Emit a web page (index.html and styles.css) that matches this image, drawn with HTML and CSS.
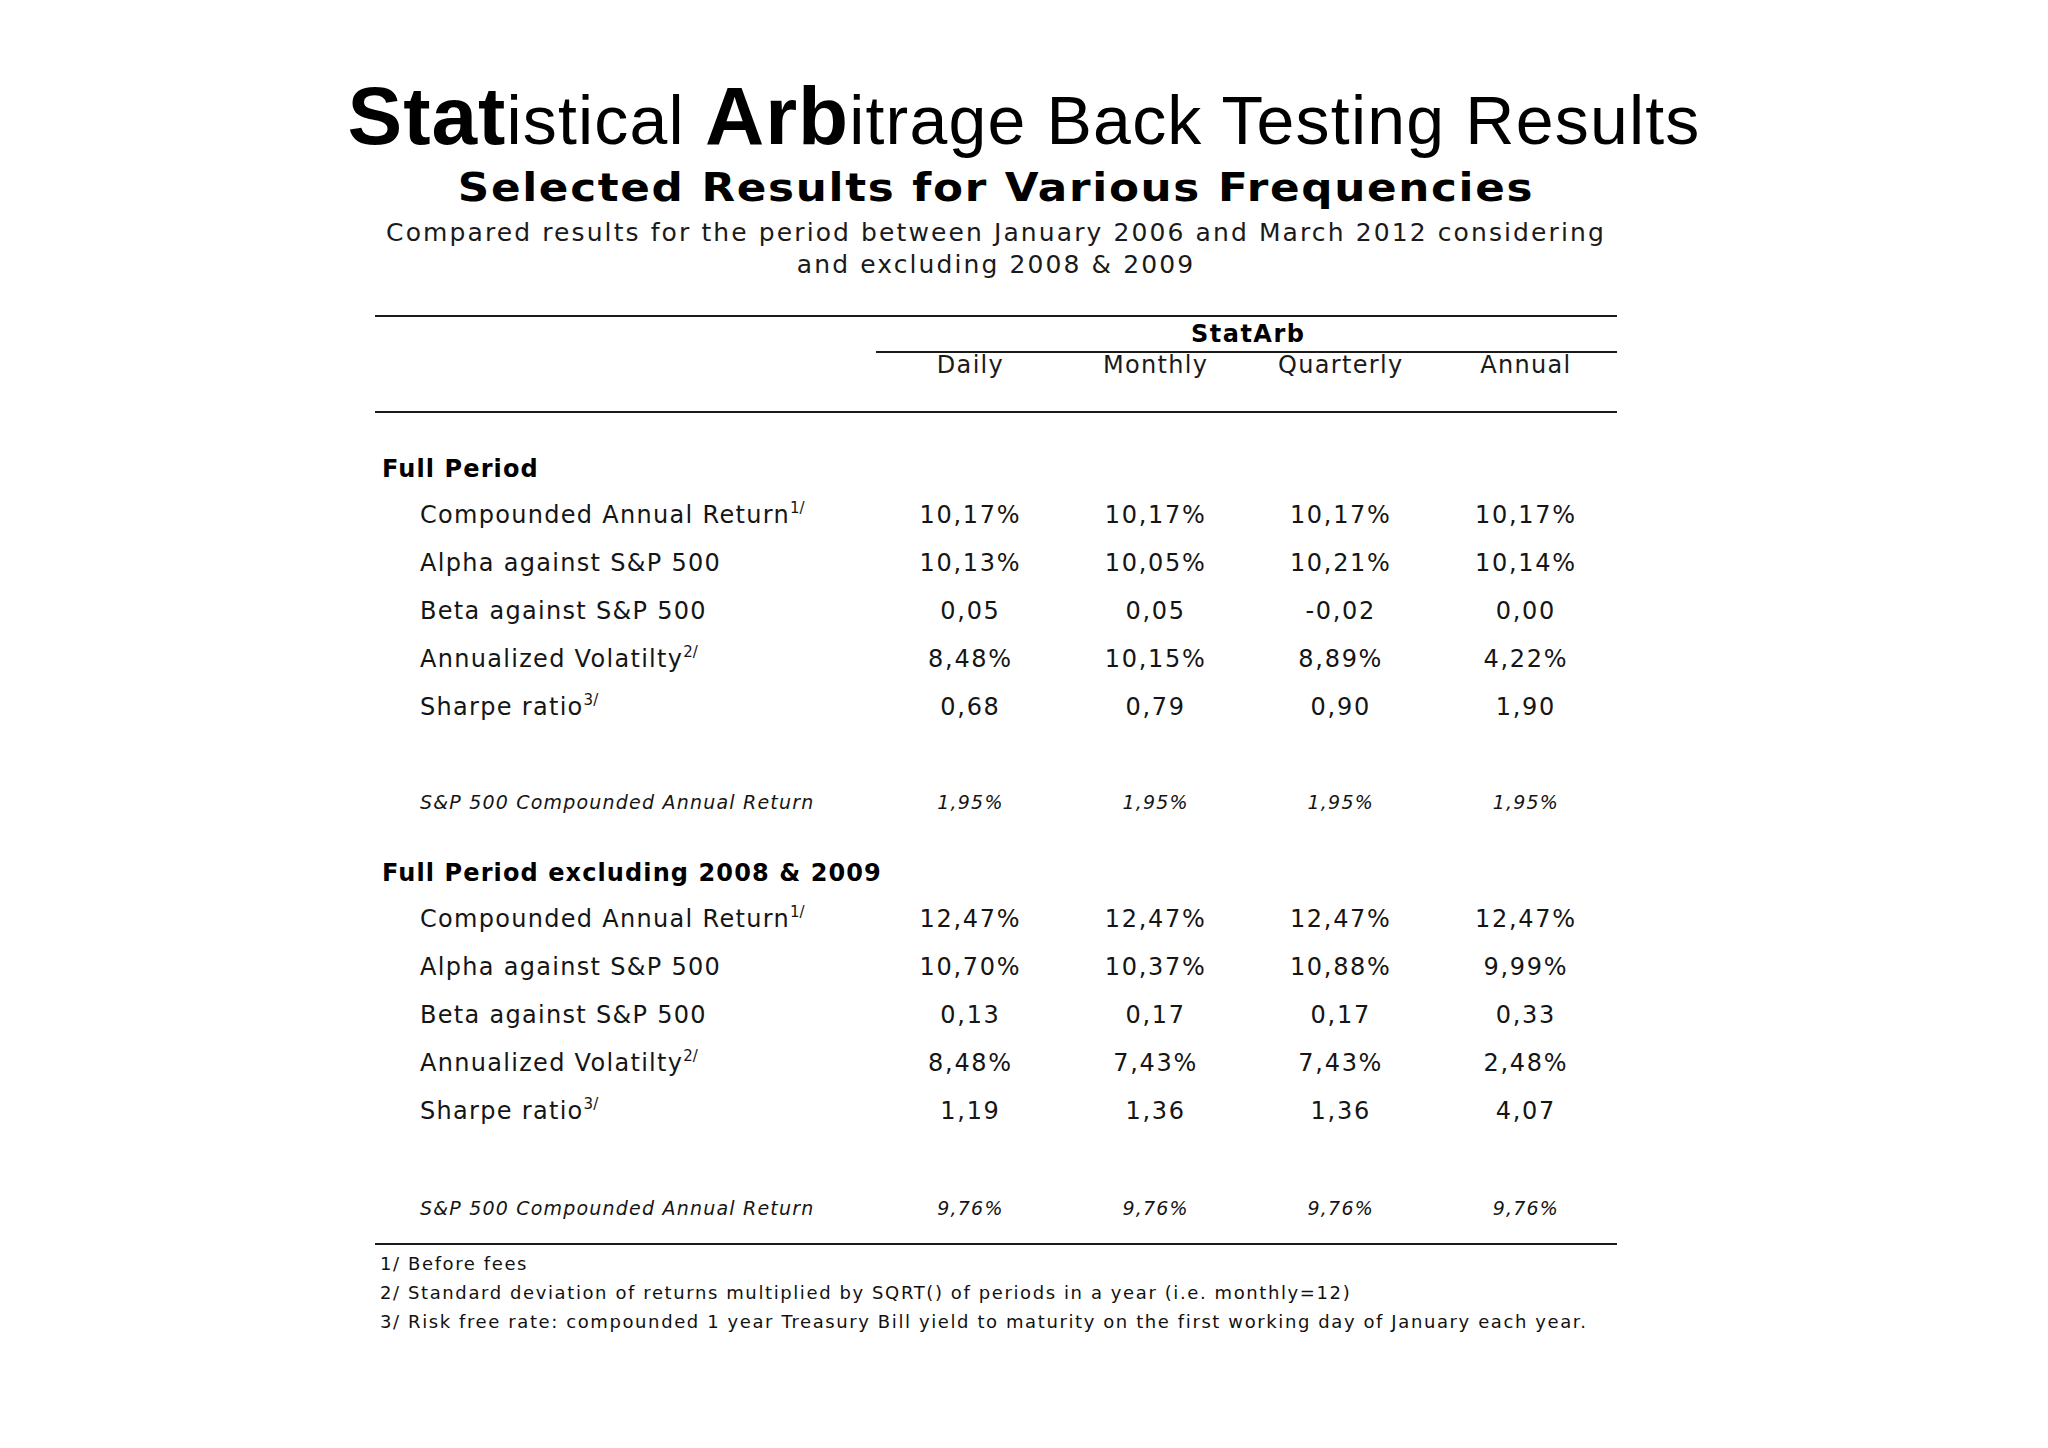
FILE: index.html
```html
<!DOCTYPE html>
<html lang="en">
<head>
<meta charset="utf-8">
<title>Statistical Arbitrage Back Testing Results</title>
<link rel="stylesheet" href="styles.css">
</head>
<body>
<main class="page">
  <h1 class="title"><b>Stat</b>istical <b>Arb</b>itrage Back Testing Results</h1>
  <section class="report">
    <h2 class="subtitle">Selected Results for Various Frequencies</h2>
    <p class="desc">Compared results for the period between January 2006 and March 2012 considering<br>and excluding 2008 &amp; 2009</p>
    <table class="results">
      <colgroup>
        <col class="c-label"><col class="c-val"><col class="c-val"><col class="c-val"><col class="c-val">
      </colgroup>
      <thead>
        <tr class="h1row">
          <th class="blank"></th>
          <th class="group" colspan="4">StatArb</th>
        </tr>
        <tr class="h2row">
          <th class="blank"></th>
          <th>Daily</th><th>Monthly</th><th>Quarterly</th><th>Annual</th>
        </tr>
      </thead>
      <tbody>
        <tr class="section first">
          <td colspan="5">Full Period</td>
        </tr>
        <tr class="data"><td>Compounded Annual Return<sup>1/</sup></td><td>10,17%</td><td>10,17%</td><td>10,17%</td><td>10,17%</td></tr>
        <tr class="data"><td>Alpha against S&amp;P 500</td><td>10,13%</td><td>10,05%</td><td>10,21%</td><td>10,14%</td></tr>
        <tr class="data"><td>Beta against S&amp;P 500</td><td>0,05</td><td>0,05</td><td>-0,02</td><td>0,00</td></tr>
        <tr class="data"><td>Annualized Volatilty<sup>2/</sup></td><td>8,48%</td><td>10,15%</td><td>8,89%</td><td>4,22%</td></tr>
        <tr class="data"><td>Sharpe ratio<sup>3/</sup></td><td>0,68</td><td>0,79</td><td>0,90</td><td>1,90</td></tr>
        <tr class="bench"><td>S&amp;P 500 Compounded Annual Return</td><td>1,95%</td><td>1,95%</td><td>1,95%</td><td>1,95%</td></tr>
        <tr class="section second">
          <td colspan="5">Full Period excluding 2008 &amp; 2009</td>
        </tr>
        <tr class="data"><td>Compounded Annual Return<sup>1/</sup></td><td>12,47%</td><td>12,47%</td><td>12,47%</td><td>12,47%</td></tr>
        <tr class="data"><td>Alpha against S&amp;P 500</td><td>10,70%</td><td>10,37%</td><td>10,88%</td><td>9,99%</td></tr>
        <tr class="data"><td>Beta against S&amp;P 500</td><td>0,13</td><td>0,17</td><td>0,17</td><td>0,33</td></tr>
        <tr class="data"><td>Annualized Volatilty<sup>2/</sup></td><td>8,48%</td><td>7,43%</td><td>7,43%</td><td>2,48%</td></tr>
        <tr class="data"><td>Sharpe ratio<sup>3/</sup></td><td>1,19</td><td>1,36</td><td>1,36</td><td>4,07</td></tr>
        <tr class="bench last"><td>S&amp;P 500 Compounded Annual Return</td><td>9,76%</td><td>9,76%</td><td>9,76%</td><td>9,76%</td></tr>
      </tbody>
    </table>
    <ol class="notes">
      <li>1/ Before fees</li>
      <li>2/ Standard deviation of returns multiplied by SQRT() of periods in a year (i.e. monthly=12)</li>
      <li>3/ Risk free rate: compounded 1 year Treasury Bill yield to maturity on the first working day of January each year.</li>
    </ol>
  </section>
</main>
</body>
</html>
```
FILE: styles.css
```css
html, body {
  margin: 0;
  padding: 0;
  background: #ffffff;
}

body {
  color: #151515;
  font-family: "DejaVu Sans", Verdana, sans-serif;
}

.page {
  width: 2048px;
  height: 1448px;
  padding-top: 76px;
  box-sizing: border-box;
}

.title {
  margin: 0;
  text-align: center;
  font-family: "Liberation Sans", Arial, sans-serif;
  font-weight: 400;
  font-size: 68px;
  line-height: 80px;
  letter-spacing: 1.2px;
  color: #000;
  white-space: nowrap;
}

.title b {
  font-size: 82px;
  font-weight: 700;
  letter-spacing: 1px;
}

.report {
  margin-left: 375px;
  width: 1242px;
}

.subtitle {
  margin: 6px 0 0;
  text-align: center;
  font-size: 39px;
  line-height: 44px;
  letter-spacing: 1.5px;
  font-weight: 700;
  color: #000;
  white-space: nowrap;
  transform: scaleX(1.12);
}

.desc {
  margin: 7px 0 0;
  text-align: center;
  font-size: 25px;
  line-height: 32px;
  letter-spacing: 2.1px;
  color: #1a1a1a;
  white-space: nowrap;
}

.results {
  margin-top: 34px;
  width: 1242px;
  table-layout: fixed;
  border-collapse: separate;
  border-spacing: 0;
  border-top: 2px solid #1a1a1a;
  font-size: 24px;
  letter-spacing: 1.3px;
}

.c-label { width: 501px; }
.c-val { width: 185px; }

.results th,
.results td {
  padding: 0;
  vertical-align: top;
  white-space: nowrap;
}

.results th {
  text-align: center;
  padding-left: 3px;
}

.results th.blank {
  padding-left: 0;
}

.h1row th {
  line-height: 34px;
  font-weight: 700;
  letter-spacing: 1.5px;
  color: #000;
}

.h1row .group {
  border-bottom: 2px solid #1a1a1a;
}

.h2row th {
  font-weight: 400;
  line-height: 24px;
  padding-bottom: 34px;
  border-bottom: 2px solid #1a1a1a;
  color: #1a1a1a;
}

.section td {
  font-weight: 700;
  line-height: 44px;
  padding-left: 7px;
  letter-spacing: 1.1px;
  color: #000;
}

.section.first td { padding-top: 34px; }
.section.second td { padding-top: 25px; }

.data td {
  line-height: 48px;
  text-align: center;
  padding-left: 3px;
}

.data td:nth-child(n+2) {
  letter-spacing: 1.7px;
}

.data td:first-child,
.bench td:first-child {
  text-align: left;
  padding-left: 45px;
}

.bench td {
  font-style: italic;
  font-size: 19px;
  line-height: 48px;
  letter-spacing: 1.2px;
  padding-top: 47px;
  padding-left: 3px;
  text-align: center;
}

.bench.last td {
  padding-top: 49px;
  padding-bottom: 11px;
  border-bottom: 2px solid #1a1a1a;
}

sup {
  font-size: 15px;
  line-height: 0;
  letter-spacing: 0;
  vertical-align: 10px;
}

.notes {
  list-style: none;
  margin: 0;
  padding: 4px 0 0 5px;
  font-size: 18px;
  line-height: 29px;
  letter-spacing: 1.6px;
  color: #111;
  white-space: nowrap;
}
```
